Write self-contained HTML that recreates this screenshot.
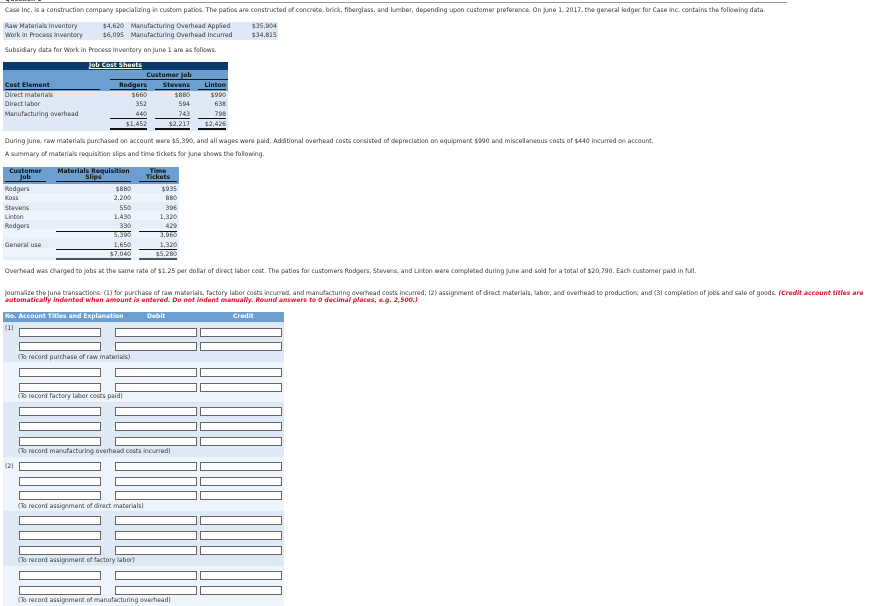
<!DOCTYPE html>
<html><head><meta charset="utf-8"><style>
*{margin:0;padding:0;box-sizing:border-box}
body{width:893px;height:606px;background:#fff;position:relative;overflow:hidden;font-family:"DejaVu Sans","Liberation Sans",sans-serif;font-size:6px;color:#333}
.a{position:absolute;white-space:nowrap;line-height:7px}
.b{position:absolute}
.r{text-align:right}
.bold{font-weight:bold;color:#111}
.in{position:absolute;height:9px;border:1px solid #666;background:#fff}
.ul{border-bottom:1px solid #111}
</style></head><body>
<div class="b" style="left:0;top:2px;width:787px;height:1px;background:#999"></div>
<div class="a bold" style="left:5px;top:-4px;color:#345">Question 1</div>
<div class="a" style="left:5px;top:7px">Case Inc. is a construction company specializing in custom patios. The patios are constructed of concrete, brick, fiberglass, and lumber, depending upon customer preference. On June 1, 2017, the general ledger for Case Inc. contains the following data.</div>

<div class="b" style="left:3px;top:22px;width:275px;height:18px;background:#dfe9f6"></div>
<div class="a" style="left:5px;top:23px">Raw Materials Inventory</div>
<div class="a" style="left:5px;top:32px">Work in Process Inventory</div>
<div class="a r" style="left:86px;top:23px;width:38px">$4,620</div>
<div class="a r" style="left:86px;top:32px;width:38px">$6,095</div>
<div class="a" style="left:131px;top:23px">Manufacturing Overhead Applied</div>
<div class="a" style="left:131px;top:32px">Manufacturing Overhead Incurred</div>
<div class="a" style="left:252px;top:23px">$35,904</div>
<div class="a" style="left:252px;top:32px">$34,815</div>

<div class="a" style="left:5px;top:47px">Subsidiary data for Work in Process Inventory on June 1 are as follows.</div>

<div class="b" style="left:3px;top:62px;width:225px;height:8px;background:#0b3a6b"></div>
<div class="a bold" style="left:89px;top:62px;color:#fff;text-decoration:underline">Job Cost Sheets</div>
<div class="b" style="left:3px;top:70px;width:225px;height:21px;background:#6b9fcf"></div>
<div class="b" style="left:3px;top:91px;width:225px;height:40px;background:#dfe9f6"></div>
<div class="a bold ul" style="left:110px;top:72px;width:118px;text-align:center">Customer Job</div>
<div class="a bold ul" style="left:5px;top:82px;width:95px">Cost Element</div>
<div class="a bold ul r" style="left:110px;top:82px;width:37px">Rodgers</div>
<div class="a bold ul r" style="left:155px;top:82px;width:35px">Stevens</div>
<div class="a bold ul r" style="left:198px;top:82px;width:28px">Linton</div>
<div class="a" style="left:5px;top:92px">Direct materials</div>
<div class="a" style="left:5px;top:101px">Direct labor</div>
<div class="a" style="left:5px;top:111px">Manufacturing overhead</div>
<div class="a r" style="left:110px;top:92px;width:37px">$660</div>
<div class="a r" style="left:110px;top:101px;width:37px">352</div>
<div class="a r ul" style="left:110px;top:111px;width:37px">440</div>
<div class="a r ul" style="left:110px;top:121px;width:37px;border-bottom:2px solid #111">$1,452</div>
<div class="a r" style="left:155px;top:92px;width:35px">$880</div>
<div class="a r" style="left:155px;top:101px;width:35px">594</div>
<div class="a r ul" style="left:155px;top:111px;width:35px">743</div>
<div class="a r ul" style="left:155px;top:121px;width:35px;border-bottom:2px solid #111">$2,217</div>
<div class="a r" style="left:198px;top:92px;width:28px">$990</div>
<div class="a r" style="left:198px;top:101px;width:28px">638</div>
<div class="a r ul" style="left:198px;top:111px;width:28px">798</div>
<div class="a r ul" style="left:198px;top:121px;width:28px;border-bottom:2px solid #111">$2,426</div>

<div class="a" style="left:5px;top:138px">During June, raw materials purchased on account were $5,390, and all wages were paid. Additional overhead costs consisted of depreciation on equipment $990 and miscellaneous costs of $440 incurred on account.</div>
<div class="a" style="left:5px;top:151px">A summary of materials requisition slips and time tickets for June shows the following.</div>

<div class="b" style="left:3px;top:167px;width:176px;height:17px;background:#6b9fcf"></div>
<div class="b" style="left:3px;top:184px;width:176px;height:76px;background:#e6eef9"></div>
<div class="b" style="left:3px;top:193px;width:176px;height:9px;background:#eef4fc"></div>
<div class="b" style="left:3px;top:211px;width:176px;height:9px;background:#eef4fc"></div>
<div class="b" style="left:3px;top:229px;width:176px;height:9px;background:#eef4fc"></div>
<div class="b" style="left:3px;top:248px;width:176px;height:9px;background:#eef4fc"></div>
<div class="a bold ul" style="left:5px;top:169px;width:41px;text-align:center;line-height:6px">Customer<br>Job</div>
<div class="a bold ul" style="left:56px;top:169px;width:75px;text-align:center;line-height:6px">Materials Requisition<br>Slips</div>
<div class="a bold ul" style="left:139px;top:169px;width:38px;text-align:center;line-height:6px">Time<br>Tickets</div>
<div class="a" style="left:5px;top:185px;line-height:9.3px">Rodgers<br>Koss<br>Stevens<br>Linton<br>Rodgers<br><br>General use</div>
<div class="a r" style="left:56px;top:185px;width:75px;line-height:9.3px">$880<br>2,200<br>550<br>1,430<br>330<br>5,390<br>1,650<br>$7,040</div>
<div class="a r" style="left:139px;top:185px;width:38px;line-height:9.3px">$935<br>880<br>396<br>1,320<br>429<br>3,960<br>1,320<br>$5,280</div>
<div class="b" style="left:56px;top:231px;width:75px;height:1px;background:#111"></div>
<div class="b" style="left:139px;top:231px;width:38px;height:1px;background:#111"></div>
<div class="b" style="left:56px;top:249px;width:75px;height:1px;background:#111"></div>
<div class="b" style="left:139px;top:249px;width:38px;height:1px;background:#111"></div>
<div class="b" style="left:56px;top:258px;width:75px;height:2px;background:#555"></div>
<div class="b" style="left:139px;top:258px;width:38px;height:2px;background:#555"></div>

<div class="a" style="left:5px;top:268px">Overhead was charged to jobs at the same rate of $1.25 per dollar of direct labor cost. The patios for customers Rodgers, Stevens, and Linton were completed during June and sold for a total of $20,790. Each customer paid in full.</div>
<div class="a" style="left:5px;top:290px">Journalize the June transactions: (1) for purchase of raw materials, factory labor costs incurred, and manufacturing overhead costs incurred; (2) assignment of direct materials, labor, and overhead to production; and (3) completion of jobs and sale of goods. <b style="color:#e0102a;font-style:italic">(Credit account titles are</b></div>
<div class="a" style="left:5px;top:297px;color:#e0102a;font-style:italic;font-weight:bold">automatically indented when amount is entered. Do not indent manually. Round answers to 0 decimal places, e.g. 2,500.)</div>

<div class="b" style="left:3px;top:312px;width:281px;height:10px;background:#6b9fcf"></div>
<div class="a bold" style="left:5px;top:313px;color:#fff">No. Account Titles and Explanation</div>
<div class="a bold" style="left:147px;top:313px;color:#fff">Debit</div>
<div class="a bold" style="left:233px;top:313px;color:#fff">Credit</div>
<div class="b" style="left:3px;top:322px;width:281px;height:40px;background:#dfe9f6"></div>
<div class="b" style="left:3px;top:362px;width:281px;height:40px;background:#eef4fc"></div>
<div class="b" style="left:3px;top:402px;width:281px;height:55px;background:#dfe9f6"></div>
<div class="b" style="left:3px;top:457px;width:281px;height:54px;background:#eef4fc"></div>
<div class="b" style="left:3px;top:511px;width:281px;height:55px;background:#dfe9f6"></div>
<div class="b" style="left:3px;top:566px;width:281px;height:40px;background:#eef4fc"></div>
<div class="a" style="left:5px;top:325px">(1)</div>
<div class="a" style="left:5px;top:463px">(2)</div>
<div class="a" style="left:18px;top:354px">(To record purchase of raw materials)</div>
<div class="a" style="left:18px;top:393px">(To record factory labor costs paid)</div>
<div class="a" style="left:18px;top:448px">(To record manufacturing overhead costs incurred)</div>
<div class="a" style="left:18px;top:503px">(To record assignment of direct materials)</div>
<div class="a" style="left:18px;top:557px">(To record assignment of factory labor)</div>
<div class="a" style="left:18px;top:597px">(To record assignment of manufacturing overhead)</div>

<div id="rows"></div>
<script>
var ys=[328,342,368,383,407,422,437,462,477,491,516,531,546,571,586];
var h='';ys.forEach(function(y){h+='<div class="in" style="left:19px;top:'+y+'px;width:82px"></div><div class="in" style="left:115px;top:'+y+'px;width:82px"></div><div class="in" style="left:200px;top:'+y+'px;width:82px"></div>';});
document.getElementById('rows').innerHTML=h;
</script>
</body></html>
